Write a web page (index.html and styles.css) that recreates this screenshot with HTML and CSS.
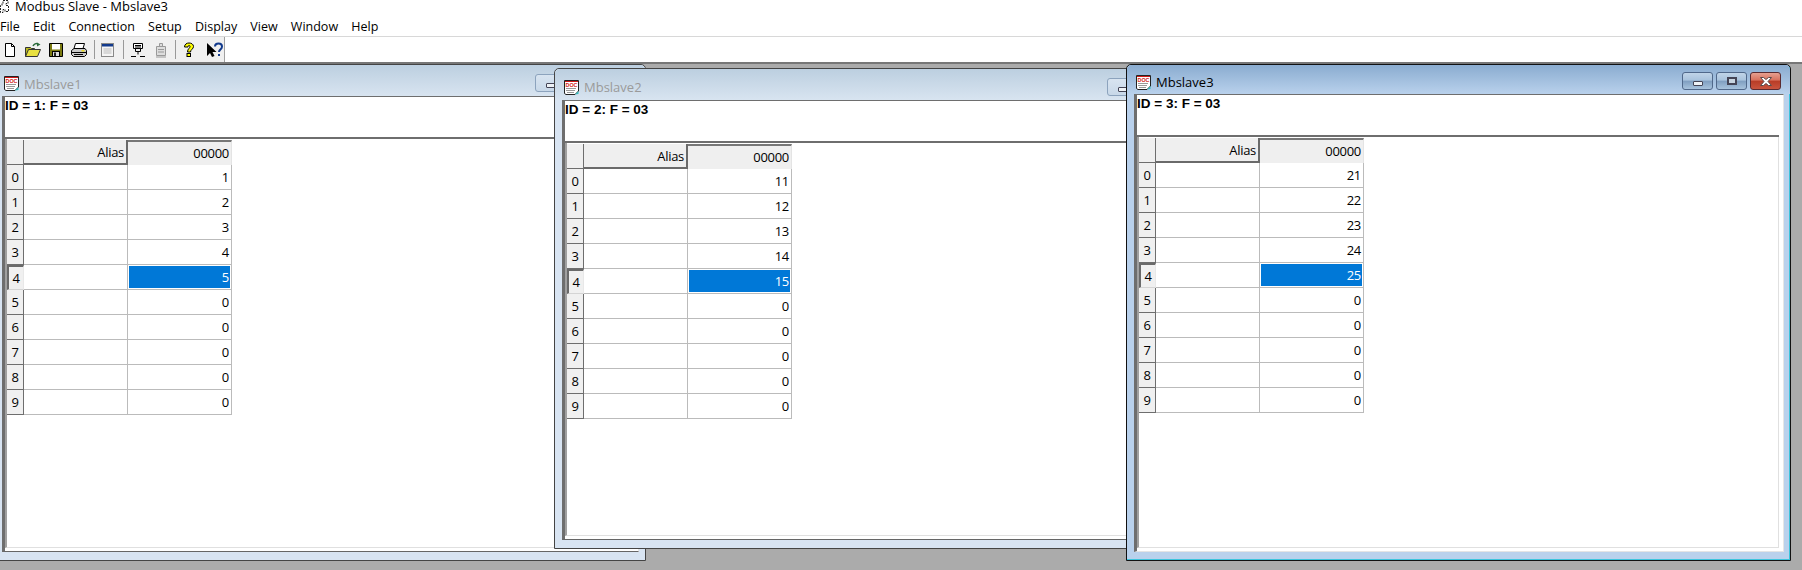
FILE: index.html
```html
<!DOCTYPE html>
<html lang="en">
<head>
<meta charset="utf-8">
<title>Modbus Slave - Mbslave3</title>
<link rel="stylesheet" href="styles.css">
</head>
<body>
<svg class="defs" width="0" height="0" aria-hidden="true">
  <symbol id="doc" viewBox="0 0 15 15">
    <path d="M.5 .5h14v10.500l-3.500 3.500H2l-1.500-1z" fill="#fff" stroke="#222"/>
    <rect x="1" y="1" width="13" height="1" fill="#d01818"/>
    <text x="7.500" y="6.800" text-anchor="middle" class="doc-label" textLength="12" lengthAdjust="spacingAndGlyphs">DOC</text>
    <path d="M2 8.500h10M2 10.500h9M3 12.500h7" stroke="#999"/>
    <path d="M11 14.500l3.500-3.500v3z" fill="#3bb" />
  </symbol>
</svg>
<header class="titlebar">
  <svg class="app-icon" viewBox="0 0 9 13"><path d="M3 .5h5v3H6v2h2.500v6H5v-2H3v3H.5v-7H2v-2h1z" fill="#fff" stroke="#222" stroke-dasharray="2 1"/></svg>
  <span>Modbus Slave - Mbslave3</span>
</header>
<nav class="menubar">
  <span>File</span><span>Edit</span><span>Connection</span><span>Setup</span><span>Display</span><span>View</span><span>Window</span><span>Help</span>
</nav>
<div class="toolbar">
  <div class="tools">
    <svg class="tool" viewBox="0 0 16 16"><path d="M3.500 1.500h6l3 3v10h-9z" fill="#fff" stroke="#000"/><path d="M9.500 1.500v3h3" fill="none" stroke="#000"/></svg>
    <svg class="tool" viewBox="0 0 16 16"><path d="M.5 14.500v-9h5l1 1h3v1" fill="#b8b820" stroke="#333"/><path d="M.5 14.500l3-7h12l-3 7z" fill="#e8e040" stroke="#333"/><path d="M8 4c1-2 3-3 5-2" fill="none" stroke="#2a6a3a" stroke-width="1.500"/><path d="M15.500 2.500L12 .5v4z" fill="#2a6a3a"/></svg>
    <svg class="tool" viewBox="0 0 16 16"><path d="M1.500 1.500h13v13h-13z" fill="#7a7a10" stroke="#000"/><rect x="4" y="2" width="8" height="5.500" fill="#fff"/><rect x="4.500" y="9.500" width="7" height="5" fill="#ddd" stroke="#000"/><rect x="6" y="10.500" width="2" height="3.500" fill="#222"/></svg>
    <svg class="tool" viewBox="0 0 16 16"><path d="M4.500 1.500h9l-1.500 5h-9z" fill="#fff" stroke="#000"/><path d="M3 6.500h11l1.500 2v4l-2 2h-11l-2-2v-4z" fill="#c8c8c8" stroke="#000"/><path d="M1 10.500h14M3 12.500h9" stroke="#000"/><rect x="10.500" y="8" width="3" height="1.500" fill="#e8d820"/></svg>
    <i class="sep"></i>
    <svg class="tool pull" viewBox="0 0 16 16"><rect x="1.500" y="1.500" width="12" height="13" fill="#f4f4f4" stroke="#888"/><rect x="2" y="2" width="11" height="2.500" fill="#123a8c"/><path d="M3.500 7h8M3.500 9h8M3.500 11h8" stroke="#bbb"/></svg>
    <i class="sep"></i>
    <svg class="tool" viewBox="0 0 16 16"><path d="M3.500 1.500h9v5h-9z" fill="#fff" stroke="#000"/><path d="M5 3.500h6M5 5h6" stroke="#000"/><path d="M5.500 6.500h5v3h-5z" fill="#eee" stroke="#000"/><path d="M1 14.500h5M10 14.500h5M8 9.500v3" stroke="#000"/></svg>
    <svg class="tool" viewBox="0 0 16 16"><path d="M6.500 1.500h3v3h-3zM3.500 4.500h9v9h-9z" fill="#ddd" stroke="#999"/><path d="M5 7.500h6M5 10h6M3 15h10" stroke="#999"/></svg>
    <i class="sep pull"></i>
    <svg class="tool" viewBox="0 0 16 16"><path d="M3.500 5C3.500 2 6 1 8 1s4.500 1 4.500 3.500C12.500 7 9.500 7.500 9.500 10H6.500C6.500 6.500 9 6.500 9 4.500 9 3 7 3 7 5z" fill="#ff0" stroke="#000"/><rect x="6" y="11.500" width="3.500" height="3" fill="#ff0" stroke="#000"/></svg>
    <svg class="tool wide" viewBox="0 0 20 16"><path d="M3 1v13l3-3 2 4 2.500-1-2-4h4z" fill="#000"/><path d="M11 4.500c0-4 7-4 7 0 0 3-3 3-3 5.500" fill="none" stroke="#123a8c" stroke-width="2"/><rect x="14" y="12" width="2" height="2" fill="#123a8c"/></svg>
  </div>
  <div class="toolbar-rest"></div>
</div>
<main class="mdi">
  <section class="win win-one inactive">
    <div class="caption"><svg class="doc"><use href="#doc"/></svg><span class="cap-text">Mbslave1</span>
      <div class="ctrls">
        <b class="ctrl min"><i></i></b>
        <b class="ctrl max"><i></i></b>
        <b class="ctrl close"><svg viewBox="0 0 12 9"><path d="M.5 .5h3L6 2.500 8.500 .5h3L8 4.500l3.500 4h-3L6 6.500 3.500 8.500h-3L4 4.500z" fill="#fff" stroke="#5a4a4a"/></svg></b>
      </div></div>
    <div class="client">
      <div class="info">ID = 1: F = 03</div>
      <div class="sheet">
        <div class="grid">
          <div class="corner"></div><div class="hd alias">Alias</div><div class="hd addr">00000</div>
          <div class="rh">0</div><div class="c"></div><div class="c n">1</div>
          <div class="rh">1</div><div class="c"></div><div class="c n">2</div>
          <div class="rh">2</div><div class="c"></div><div class="c n">3</div>
          <div class="rh">3</div><div class="c"></div><div class="c n">4</div>
          <div class="rh on">4</div><div class="c"></div><div class="c n sel"><span>5</span></div>
          <div class="rh">5</div><div class="c"></div><div class="c n">0</div>
          <div class="rh">6</div><div class="c"></div><div class="c n">0</div>
          <div class="rh">7</div><div class="c"></div><div class="c n">0</div>
          <div class="rh">8</div><div class="c"></div><div class="c n">0</div>
          <div class="rh">9</div><div class="c"></div><div class="c n">0</div>
        </div>
      </div>
    </div>
  </section>
  <section class="win win-two inactive">
    <div class="caption"><svg class="doc"><use href="#doc"/></svg><span class="cap-text">Mbslave2</span>
      <div class="ctrls">
        <b class="ctrl min"><i></i></b>
        <b class="ctrl max"><i></i></b>
        <b class="ctrl close"><svg viewBox="0 0 12 9"><path d="M.5 .5h3L6 2.500 8.500 .5h3L8 4.500l3.500 4h-3L6 6.500 3.500 8.500h-3L4 4.500z" fill="#fff" stroke="#5a4a4a"/></svg></b>
      </div></div>
    <div class="client">
      <div class="info">ID = 2: F = 03</div>
      <div class="sheet">
        <div class="grid">
          <div class="corner"></div><div class="hd alias">Alias</div><div class="hd addr">00000</div>
          <div class="rh">0</div><div class="c"></div><div class="c n">11</div>
          <div class="rh">1</div><div class="c"></div><div class="c n">12</div>
          <div class="rh">2</div><div class="c"></div><div class="c n">13</div>
          <div class="rh">3</div><div class="c"></div><div class="c n">14</div>
          <div class="rh on">4</div><div class="c"></div><div class="c n sel"><span>15</span></div>
          <div class="rh">5</div><div class="c"></div><div class="c n">0</div>
          <div class="rh">6</div><div class="c"></div><div class="c n">0</div>
          <div class="rh">7</div><div class="c"></div><div class="c n">0</div>
          <div class="rh">8</div><div class="c"></div><div class="c n">0</div>
          <div class="rh">9</div><div class="c"></div><div class="c n">0</div>
        </div>
      </div>
    </div>
  </section>
  <section class="win win-three">
    <div class="caption"><svg class="doc"><use href="#doc"/></svg><span class="cap-text">Mbslave3</span>
      <div class="ctrls">
        <b class="ctrl min"><i></i></b>
        <b class="ctrl max"><i></i></b>
        <b class="ctrl close"><svg viewBox="0 0 12 9"><path d="M.5 .5h3L6 2.500 8.500 .5h3L8 4.500l3.500 4h-3L6 6.500 3.500 8.500h-3L4 4.500z" fill="#fff" stroke="#5a4a4a"/></svg></b>
      </div></div>
    <div class="client">
      <div class="info">ID = 3: F = 03</div>
      <div class="sheet">
        <div class="grid">
          <div class="corner"></div><div class="hd alias">Alias</div><div class="hd addr">00000</div>
          <div class="rh">0</div><div class="c"></div><div class="c n">21</div>
          <div class="rh">1</div><div class="c"></div><div class="c n">22</div>
          <div class="rh">2</div><div class="c"></div><div class="c n">23</div>
          <div class="rh">3</div><div class="c"></div><div class="c n">24</div>
          <div class="rh on">4</div><div class="c"></div><div class="c n sel"><span>25</span></div>
          <div class="rh">5</div><div class="c"></div><div class="c n">0</div>
          <div class="rh">6</div><div class="c"></div><div class="c n">0</div>
          <div class="rh">7</div><div class="c"></div><div class="c n">0</div>
          <div class="rh">8</div><div class="c"></div><div class="c n">0</div>
          <div class="rh">9</div><div class="c"></div><div class="c n">0</div>
        </div>
      </div>
    </div>
  </section>
</main>
</body>
</html>
```
FILE: styles.css
```css
* { box-sizing: border-box; }
html, body { margin: 0; height: 100%; }
body { width: 1802px; height: 570px; overflow: hidden; background: #fff; font-family: "Open Sans", "Noto Sans", sans-serif; font-size: 12.5px; color: #000; display: flex; flex-direction: column; }
.defs { position: absolute; }
.doc-label { font: 700 5.500px "Liberation Sans", sans-serif; fill: #d01818; }

.titlebar { height: 17px; display: flex; align-items: flex-start; gap: 6px; font-size: 13px; line-height: 13px; flex: none; }
.app-icon { width: 9px; height: 13px; flex: none; }
.menubar { height: 19px; display: flex; align-items: center; flex: none; font-size: 12.5px; }
.menubar span { margin-right: 13.2px; }

.toolbar { height: 26px; display: flex; flex: none; border-top: 1px solid #d8d8d8; background: #fff; }
.tools { width: 225px; background: #f0f0f0; border-right: 1px solid #a0a0a0; display: flex; align-items: center; padding-left: 2px; }
.tool { width: 16px; height: 16px; flex: none; margin-right: 7px; }
.tool.wide { width: 20px; margin-right: 0; }
.tool.pull { margin-left: -1px; }
.sep { width: 1px; height: 19px; background: #999; margin-right: 6px; flex: none; }
.sep.pull { margin-left: -1px; margin-right: 5px; }
.toolbar-rest { flex: 1; }

.mdi { position: relative; flex: 1; background: #ababab; border-top: 2px solid #777; overflow: hidden; }
.win { position: absolute; display: flex; flex-direction: column; background: #d8e4f2; border: 1px solid #444; border-radius: 5px 5px 0 0; padding: 0 6px 8px 7px; }
.win-one { left: -6px; top: 0; width: 652px; height: 497px; }
.win-two { left: 554px; top: 4px; width: 661px; height: 481px; }
.win-three { left: 1126px; top: 0; width: 665px; height: 497px; background: #b9d1ec; border-color: #111; box-shadow: inset -1px -1px 0 #3cc4dc; }

.caption { height: 31px; flex: none; display: flex; align-items: center; gap: 5px; margin: 0 -6px 0 -7px; padding: 5px 8px 0 9px; background: linear-gradient(#bccfe0, #d8e4f0); border-radius: 5px 5px 0 0; }
.win-one .caption { padding-top: 6px; }
.win-three .caption { height: 29px; background: linear-gradient(#8aacd0, #b9d1ec); }
.doc { width: 15px; height: 15px; flex: none; }
.cap-text { font-size: 13px; color: #9a9a9a; }
.win-three .cap-text { color: #000; }

.ctrls { margin-left: auto; display: flex; gap: 3px; align-self: flex-start; margin-top: 4px; }
.win-one .ctrls { margin-right: 3px; margin-top: 3px; }
.win-three .ctrls { margin-top: 2px; margin-right: 1px; }
.ctrl { width: 31px; height: 18px; display: flex; justify-content: center; border: 1px solid #50688a; border-radius: 3px; background: linear-gradient(#c0d4e8, #a9c3dd 45%, #7f9ec0 50%, #a8c3dd); }
.ctrl i { display: block; }
.ctrl.min i { width: 10px; height: 5px; margin-top: 8px; background: #eef2f6; border: 1px solid #445; border-radius: 1px; }
.ctrl.max i { width: 10px; height: 8px; margin-top: 4px; border: 2px solid #445; background: #c8d4e0; }
.ctrl.close { background: linear-gradient(#e6a090, #d8705c 45%, #b83c26 50%, #c9543e); border-color: #5a2a30; align-items: center; }
.ctrl.close svg { width: 12px; height: 9px; }
.inactive .ctrl { border-color: #8ca3bd; background: linear-gradient(#d8e4f0, #c8d8e8); }

.client { flex: 1; min-height: 0; background: #fff; display: flex; flex-direction: column; border-left: 3px solid #6e6e6e; border-top: 1px solid #6e6e6e; border-right: 1px solid #e6e6e6; border-bottom: 1px solid #e4e4e4; padding: 0 4px 3px 0; }
.inactive .client { border-bottom-color: #666; }
.info { height: 42px; flex: none; font-family: "Liberation Sans", Arial, sans-serif; font-size: 13.5px; font-weight: 700; line-height: 17px; border-bottom: 2px solid #6e6e6e; }
.sheet { flex: 1; min-height: 0; padding-top: 1px; border-left: 2px solid #a0a0a0; border-right: 1px solid #e0e0e0; border-bottom: 1px solid #e0e0e0; }

.grid { display: grid; grid-template-columns: 17px 104px 104px; grid-auto-rows: 25px; width: max-content; font-size: 13px; letter-spacing: -0.3px; line-height: 24px; }
.corner { background: #f0f0f0; border-right: 1px solid #6e6e6e; border-bottom: 1px solid #6e6e6e; }
.hd { background: #efefef; text-align: right; padding-right: 2px; }
.alias { border-right: 2px solid #6a6a6a; border-bottom: 2px solid #6a6a6a; line-height: 24px; }
.addr { border-top: 2px solid #777; border-right: 1px solid #e4e4e4; line-height: 22px; }
.rh { background: #f0f0f0; border-right: 1px solid #6e6e6e; border-bottom: 1px solid #6e6e6e; text-align: center; }
.rh.on { border-left: 2px solid #6a6a6a; border-top: 2px solid #6a6a6a; border-right-color: #e8e8e8; border-bottom-color: #d4d4d4; line-height: 22px; }
.c { border-right: 1px solid #bbb; border-bottom: 1px solid #bbb; }
.n { text-align: right; padding-right: 2px; }
.sel { padding: 1px 1px 1px 1px; }
.sel span { display: block; height: 22px; line-height: 22px; background: #0078d7; color: #fff; padding-right: 1px; }
```
